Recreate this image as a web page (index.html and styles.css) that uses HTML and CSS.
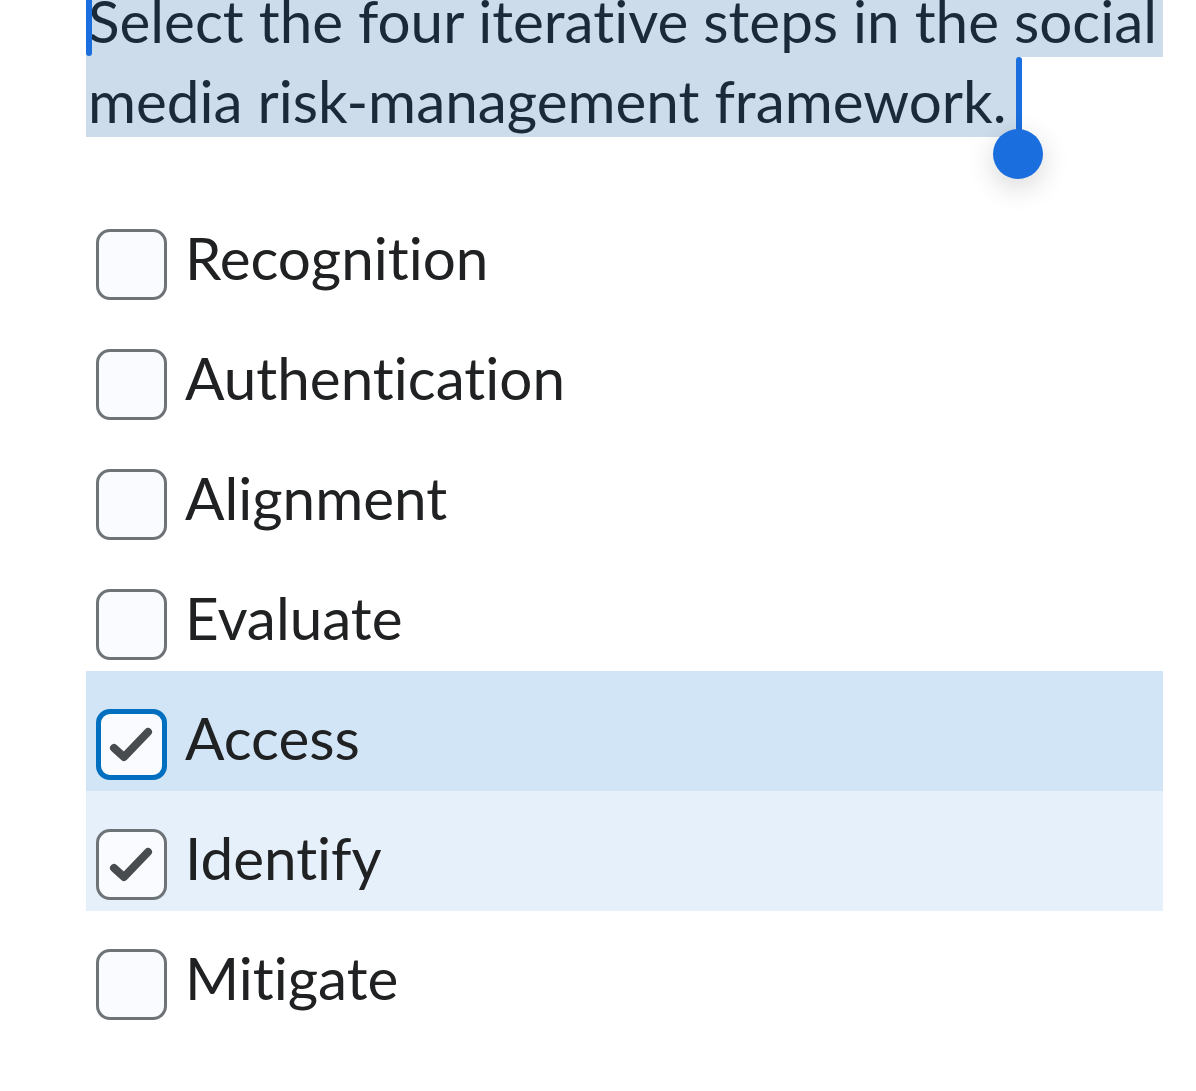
FILE: index.html
```html
<!DOCTYPE html>
<html lang="en">
<head>
<meta charset="utf-8">
<title>Question</title>
<link rel="stylesheet" href="styles.css">
</head>
<body>
<div class="page">
  <div class="question">
    <div class="qline qline-full">Select the four iterative steps in the social</div>
    <div class="qline qline-part">media risk-management framework.</div>
    <span class="handle-start"></span>
    <span class="handle-start-ball"></span>
    <span class="handle-end"></span>
    <span class="handle-end-ball"></span>
  </div>

  <ul class="options">
    <li class="option"><span class="box"></span><span class="label">Recognition</span></li>
    <li class="option"><span class="box"></span><span class="label">Authentication</span></li>
    <li class="option"><span class="box"></span><span class="label">Alignment</span></li>
    <li class="option"><span class="box"></span><span class="label">Evaluate</span></li>
    <li class="option option-focus"><span class="box box-focus"><svg class="check" viewBox="0 0 70 70" width="70" height="70"><path d="M18 39 L28 48 L52 23"/></svg></span><span class="label">Access</span></li>
    <li class="option option-checked"><span class="box"><svg class="check" viewBox="0 0 70 70" width="70" height="70"><path d="M18 39 L28 48 L52 23"/></svg></span><span class="label">Identify</span></li>
    <li class="option"><span class="box"></span><span class="label">Mitigate</span></li>
  </ul>
</div>
</body>
</html>
```

FILE: styles.css
```css
* { box-sizing: border-box; }

html, body {
  margin: 0;
  padding: 0;
  background: #ffffff;
  overflow: hidden;
}

body {
  font-family: Lato, "Open Sans", sans-serif;
  font-variant-ligatures: none;
  font-feature-settings: "liga" 0, "clig" 0;
  color: #202122;
}

.page {
  margin-left: 86px;
  width: 1077px;
}

.question {
  position: relative;
  margin-top: -23px;
  font-size: 58.4px;
  color: #1b2a3b;
}

.qline {
  height: 80px;
  line-height: 86px;
  white-space: nowrap;
  background: #cddcea;
  padding-left: 2px;
}

.qline-part {
  display: inline-block;
  padding-right: 12px;
}

.handle-start {
  position: absolute;
  left: 0;
  top: 0;
  width: 6px;
  height: 79px;
  background: #1a6edd;
  border-radius: 0 0 3px 3px;
}

.handle-start-ball {
  position: absolute;
  left: -22px;
  top: -60px;
  width: 50px;
  height: 50px;
  border-radius: 50%;
  background: #1a6edd;
  box-shadow: 0 8px 30px rgba(0, 0, 0, 0.16);
}

.handle-end {
  position: absolute;
  left: 930px;
  top: 80px;
  width: 6px;
  height: 80px;
  background: #1a6edd;
  border-radius: 3px 3px 0 0;
}

.handle-end-ball {
  position: absolute;
  left: 907px;
  top: 152px;
  width: 50px;
  height: 50px;
  border-radius: 50%;
  background: #1a6edd;
  box-shadow: 0 8px 28px rgba(0, 0, 0, 0.16);
}

.options {
  list-style: none;
  margin: 54px 0 0;
  padding: 0;
}

.option {
  display: flex;
  align-items: flex-start;
  height: 120px;
}

.option-focus { background: #d2e5f7; }
.option-checked { background: #e6f0fa; }

.box {
  flex: none;
  position: relative;
  width: 71px;
  height: 71px;
  margin-top: 38px;
  margin-left: 10px;
  border: 3px solid #6e7377;
  border-radius: 14px;
  background: #f9fbff;
}

.box-focus {
  border: 5px solid #006fbf;
}

.check {
  position: absolute;
  left: -3px;
  top: -3px;
}

.box-focus .check {
  left: -5px;
  top: -5px;
}

.check path {
  fill: none;
  stroke: #494c4e;
  stroke-width: 8;
  stroke-linecap: round;
  stroke-linejoin: round;
}

.label {
  margin-left: 18px;
  margin-top: 31px;
  font-size: 58.4px;
  line-height: 70px;
  color: #202122;
  white-space: nowrap;
}
```
